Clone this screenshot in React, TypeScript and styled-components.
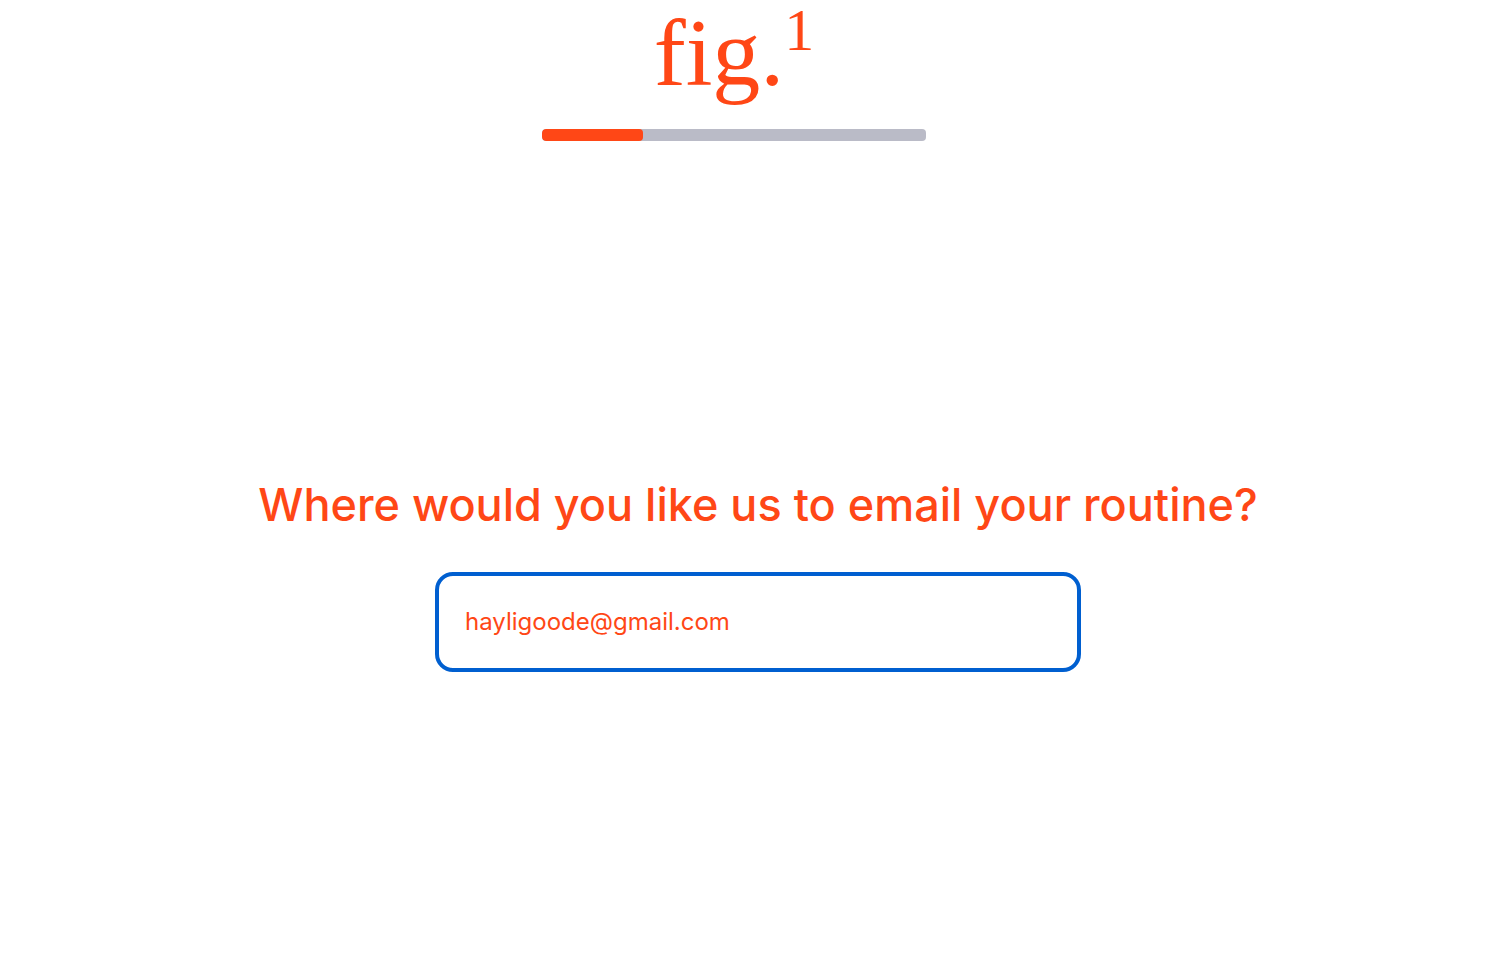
import React, { useState } from "react";
import styled, { createGlobalStyle } from "styled-components";

const GlobalStyle = createGlobalStyle`
  *, *::before, *::after { box-sizing: border-box; }
  body {
    margin: 0;
    background: #ffffff;
    color: #ff4716;
    font-family: Inter, "Liberation Sans", sans-serif;
  }
`;

const Page = styled.div`
  display: flex;
  flex-direction: column;
  min-height: 100vh;
`;

const Header = styled.header`
  display: flex;
  flex-direction: column;
  align-items: center;
  gap: 24px;
  padding-right: 32px;
`;

const Logo = styled.a`
  display: flex;
  align-items: flex-start;
  color: inherit;
  text-decoration: none;
  font-family: "Liberation Serif", serif;
  font-size: 96px;
  line-height: 105px;
`;

const LogoMark = styled.sup`
  font-size: 60px;
  line-height: 60px;
`;

const Progress = styled.div`
  width: 384px;
  max-width: 100%;
  height: 12px;
  border-radius: 4px;
  background: #babbc7;
  overflow: hidden;
`;

const ProgressFill = styled.div`
  height: 100%;
  border-radius: 4px;
  background: #ff4716;
`;

const Question = styled.form`
  display: flex;
  flex-direction: column;
  align-items: center;
  gap: 37px;
  padding: 334px 0 32px 16px;
`;

const Prompt = styled.label`
  font-size: 45px;
  font-weight: 500;
  line-height: 60px;
  text-align: center;
`;

const EmailInput = styled.input`
  width: 646px;
  max-width: 100%;
  height: 100px;
  padding: 0 26px 2px;
  border: 4px solid #005fd0;
  border-radius: 18px;
  outline: none;
  background: #ffffff;
  color: #ff4716;
  font-family: inherit;
  font-size: 24px;
  font-weight: 400;
`;

export default function App() {
  const [email, setEmail] = useState("hayligoode@gmail.com");
  const progress = 101 / 384;

  return (
    <Page>
      <GlobalStyle />
      <Header>
        <Logo href="#">
          <span>fig.</span>
          <LogoMark>1</LogoMark>
        </Logo>
        <Progress role="progressbar" aria-label="Quiz progress" aria-valuenow={Math.round(progress * 100)}>
          <ProgressFill style={{ width: `${progress * 100}%` }} />
        </Progress>
      </Header>
      <main>
        <Question onSubmit={(e) => e.preventDefault()}>
          <Prompt htmlFor="email">Where would you like us to email your routine?</Prompt>
          <EmailInput
            id="email"
            type="email"
            value={email}
            onChange={(e) => setEmail(e.target.value)}
          />
        </Question>
      </main>
    </Page>
  );
}
